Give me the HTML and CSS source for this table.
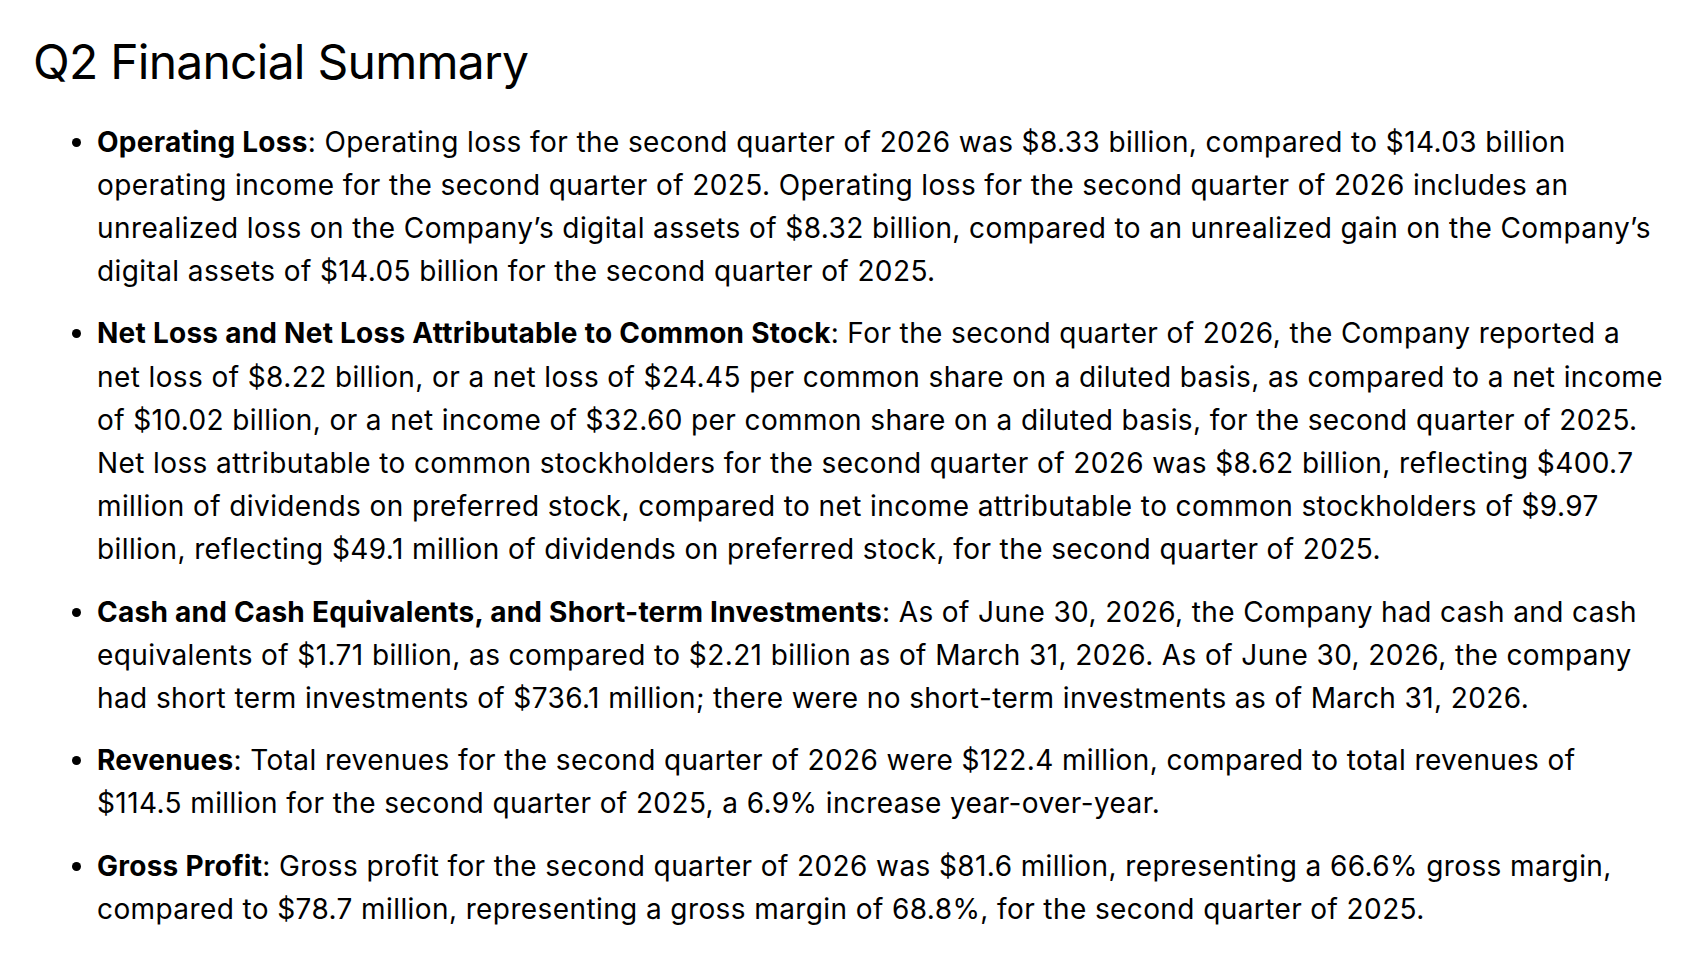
FILE: index.html
```html
<!DOCTYPE html>
<html lang="en">
<head>
<meta charset="utf-8">
<title>Q2 Financial Summary</title>
<link rel="stylesheet" href="styles.css">
</head>
<body>
<main class="page">
  <h1 class="title">Q2 Financial Summary</h1>
  <ul class="summary">
    <li class="item"><strong>Operating Loss</strong>: Operating loss for the second quarter of 2026 was $8.33 billion, compared to $14.03 billion operating income for the second quarter of 2025. Operating loss for the second quarter of 2026 includes an unrealized loss on the Company’s digital assets of $8.32 billion, compared to an unrealized gain on the Company’s digital assets of $14.05 billion for the second quarter of 2025.</li>
    <li class="item"><strong>Net Loss and Net Loss Attributable to Common Stock</strong>: For the second quarter of 2026, the Company reported a net loss of $8.22 billion, or a net loss of $24.45 per common share on a diluted basis, as compared to a net income of $10.02 billion, or a net income of $32.60 per common share on a diluted basis, for the second quarter of 2025. Net loss attributable to common stockholders for the second quarter of 2026 was $8.62 billion, reflecting $400.7 million of dividends on preferred stock, compared to net income attributable to common stockholders of $9.97 billion, reflecting $49.1 million of dividends on preferred stock, for the second quarter of 2025.</li>
    <li class="item"><strong>Cash and Cash Equivalents, and Short-term Investments</strong>: As of June 30, 2026, the Company had cash and cash equivalents of $1.71 billion, as compared to $2.21 billion as of March 31, 2026. As of June 30, 2026, the company had short term investments of $736.1 million; there were no short-term investments as of March 31, 2026.</li>
    <li class="item"><strong>Revenues</strong>: Total revenues for the second quarter of 2026 were $122.4 million, compared to total revenues of $114.5 million for the second quarter of 2025, a 6.9% increase year-over-year.</li>
    <li class="item"><strong>Gross Profit</strong>: Gross profit for the second quarter of 2026 was $81.6 million, representing a 66.6% gross margin, compared to $78.7 million, representing a gross margin of 68.8%, for the second quarter of 2025.</li>
  </ul>
</main>
</body>
</html>
```
FILE: styles.css
```css
html, body {
  margin: 0;
  padding: 0;
  background: #ffffff;
}

body {
  font-family: Inter, "Noto Sans", "Liberation Sans", sans-serif;
  color: #000000;
}

.page {
  padding: 33px 33px 0 33px;
}

.title {
  margin: 0;
  font-size: 48px;
  font-weight: 400;
  line-height: 1.2;
  letter-spacing: -0.75px;
}

.summary {
  margin: 30px 0 0 0;
  padding-left: 64px;
  list-style: disc;
}

.item {
  font-size: 28px;
  line-height: 43.2px;
  letter-spacing: 0.4px;
  margin-bottom: 19px;
}

.item strong {
  font-weight: 700;
  letter-spacing: 0.25px;
}
```
